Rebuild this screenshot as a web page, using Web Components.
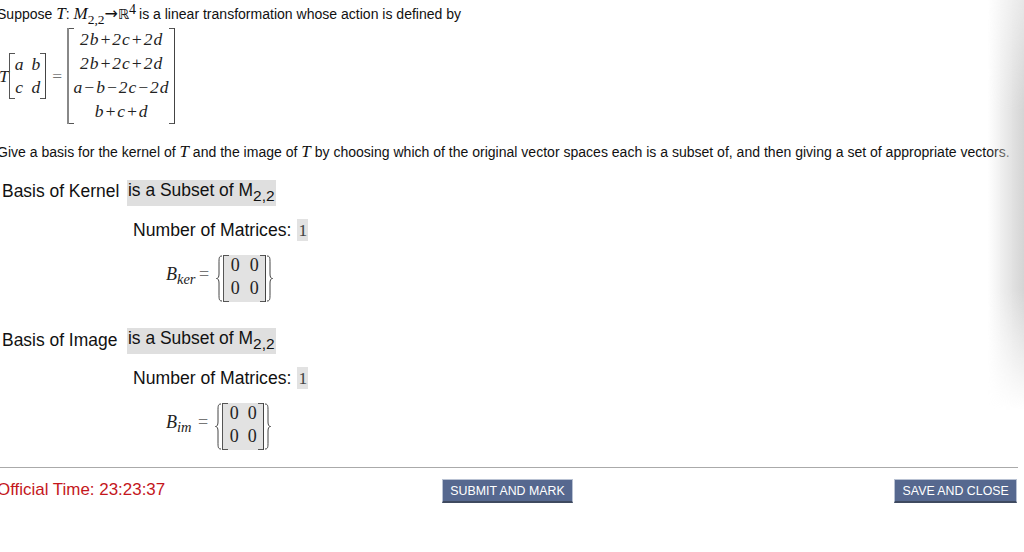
<!DOCTYPE html>
<html>
<head>
<meta charset="utf-8">
<style>
  html, body { margin: 0; padding: 0; background: #fff; overflow: hidden; }
  body { font-family: "Liberation Sans", Arial, sans-serif; color: #111; height: 552px; }
</style>
</head>
<body>
<question-page></question-page>

<script>
  const MATH = '"Liberation Serif", "Times New Roman", serif'

  // Matriz con corchetes dibujados con bordes
  class MathMatrix extends HTMLElement {
    connectedCallback() {
      const rows = JSON.parse(this.getAttribute("rows"))
      const cols = rows[0].length
      const cells = rows.flat().map(c => `<span class="cell">${c}</span>`).join("")
      this.attachShadow({ mode: "open" }).innerHTML = `
        <style>
          :host { display: inline-flex; position: relative; font: var(--math-size, 17.5px) ${MATH}; color: #222; }
          .grid {
            display: grid;
            grid-template-columns: repeat(${cols}, auto);
            grid-auto-rows: var(--row-h, 24px);
            column-gap: var(--col-gap, 8px);
            padding: var(--pad-y, 0) var(--pad-x, 6px);
            align-items: center;
            justify-items: center;
            border-left: var(--left-w, 1px) solid var(--left-c, #555);
            border-right: 1px solid #444;
            position: relative;
            background: var(--cell-bg, transparent);
            letter-spacing: var(--spacing, 0);
          }
          .grid::before, .grid::after {
            content: "";
            position: absolute;
            top: 0;
            bottom: 0;
            width: 5px;
            border-top: 1px solid #555;
            border-bottom: 1px solid #555;
          }
          .grid::before { left: 0; }
          .grid::after { right: 0; }
          .cell { font-style: var(--cell-style, italic); white-space: nowrap; padding-bottom: var(--lift, 2px); }
        </style>
        <div class="grid">${cells}</div>
      `
    }
  }

  class BasisBlock extends HTMLElement {
    connectedCallback() {
      const label = this.getAttribute("label")
      const sub = this.getAttribute("sub")
      const top = this.getAttribute("top")
      const gap = this.getAttribute("gap")
      const lead = this.getAttribute("lead")
      this.attachShadow({ mode: "open" }).innerHTML = `
        <style>
          :host { display: block; font-size: 17.45px; color: #111; }
          .head { display: flex; align-items: flex-start; padding-left: 5px; }
          .label { width: 125px; padding-top: ${top}px; line-height: 22px; white-space: nowrap; }
          .subset { background: #dfdfdf; height: 26px; padding: 0 1px; line-height: 21px; white-space: nowrap; }
          .subset sub { font-size: 15.5px; line-height: 0; vertical-align: -5px; }
          .count { display: flex; align-items: flex-start; margin: 13px 0 0 136px; height: 22px; line-height: 22px; font-size: 17.6px; white-space: nowrap; }
          .count span {
            margin-left: 6px; background: #e2e2e2; padding: 0 1px;
            font-family: ${MATH}; color: #444; line-height: 22px;
          }
          .eq { display: flex; align-items: center; height: 47px; margin: 14px 0 0 169px; font-family: ${MATH}; color: #222; }
          .eq i { font-size: 18px; width: ${lead}px; white-space: nowrap; padding-bottom: 8px; }
          .eq i sub { font-size: 14.5px; line-height: 0; vertical-align: -4px; }
          .eq b { font-weight: normal; font-size: 18px; margin: 0 7px 0 4px; color: #777; padding-bottom: 8px; }
          .brace { width: 7px; height: 47px; flex: none; }
          math-matrix {
            --row-h: 23.5px; --col-gap: ${gap}px; --pad-x: 6.5px; --lift: 3px;
            --cell-bg: #e2e2e2; --cell-style: normal; --math-size: 18px;
          }
        </style>
        <div class="head">
          <div class="label">${label}</div>
          <div class="subset">is a Subset of M<sub>2,2</sub></div>
        </div>
        <div class="count">Number of Matrices:<span>1</span></div>
        <div class="eq">
          <i>B<sub>${sub}</sub></i><b>=</b>
          <svg class="brace" viewBox="0 0 7 47" fill="none" stroke="#444" stroke-width="1"><path d="M6 1C3 1 3 3 3 8V19C3 22 2 23.5 0.5 23.5C2 23.5 3 25 3 28V39C3 44 3 46 6 46"/></svg>
          <math-matrix rows='[["0","0"],["0","0"]]'></math-matrix>
          <svg class="brace" viewBox="0 0 7 47" fill="none" stroke="#444" stroke-width="1"><path d="M1 1C4 1 4 3 4 8V19C4 22 5 23.5 6.5 23.5C5 23.5 4 25 4 28V39C4 44 4 46 1 46"/></svg>
        </div>
      `
    }
  }

  class ActionButton extends HTMLElement {
    constructor() {
      super()
      this.attachShadow({ mode: "open" }).innerHTML = `
        <style>
          :host { display: inline-block; }
          button {
            display: block;
            height: 24px;
            padding: 0 7.3px;
            background: #56688f;
            color: #fff;
            font: 12.35px "Liberation Sans", Arial, sans-serif;
            border: 0;
            border-top: 1px solid #b9c2d3;
            border-left: 1px solid #b9c2d3;
            border-right: 1px solid #b9c2d3;
            border-bottom: 2px solid #3f4a60;
            white-space: nowrap;
          }
        </style>
        <button><slot></slot></button>
      `
    }
  }

  class QuestionPage extends HTMLElement {
    constructor() {
      super()
      this.attachShadow({ mode: "open" }).innerHTML = `
        <style>
          :host { display: block; position: relative; height: 552px; overflow: hidden; font-size: 14.04px; }
          .content { margin-left: -3px; width: 1021px; }
          .m { font-family: ${MATH}; font-style: italic; font-size: 17px; }
          .intro { padding-top: 4px; height: 24px; line-height: 19px; white-space: nowrap; }
          .intro sub { font-size: 13.5px; line-height: 0; vertical-align: -5px; font-style: normal; }
          .intro sup { font-size: 14px; line-height: 0; vertical-align: 5px; font-family: ${MATH}; margin-right: -1px; }
          .ar { font-family: "DejaVu Sans", sans-serif; font-size: 16px; }
          .rr { font-family: "DejaVu Sans", sans-serif; font-size: 14px; }
          .def { display: flex; align-items: center; height: 96px; font-family: ${MATH}; font-size: 17.5px; color: #222; }
          .def .t { font-style: italic; margin-left: 2px; }
          .def .eq { margin: 0 5px 0 6px; color: #777; }
          .small { --row-h: 23px; --col-gap: 8px; --pad-x: 5px; --lift: 1px; }
          .big { --row-h: 24px; --pad-x: 4.5px; --spacing: 1px; --left-w: 2px; --left-c: #888; }
          .give { margin-top: 18px; height: 19px; line-height: 19px; white-space: nowrap; }
          .kernel { margin-top: 19px; }
          .image { margin-top: 26px; }
          hr { margin: 17px 0 0 0; border: 0; height: 1px; background: #aaa; }
          .foot { display: flex; align-items: flex-start; margin-top: 11px; padding-right: 1px; }
          .time { color: #c4161c; font-size: 16.95px; line-height: 22px; width: 445px; }
          .foot .spacer { flex: 1; }
          .shade {
            position: absolute; top: 0; right: 0; height: 410px; width: 36px;
            background: linear-gradient(to right, rgba(212,212,212,0), rgba(212,212,212,1));
            -webkit-mask-image: linear-gradient(to bottom, rgba(0,0,0,.55), #000 110px, #000 290px, transparent);
            mask-image: linear-gradient(to bottom, rgba(0,0,0,.55), #000 110px, #000 290px, transparent);
            pointer-events: none;
          }
        </style>
        <div class="content">
          <div class="intro">Suppose <span class="m">T</span>: <span class="m">M<sub>2,2</sub></span><span class="ar">→</span><span class="rr">ℝ</span><sup>4</sup> is a linear transformation whose action is defined by</div>
          <div class="def">
            <span class="t">T</span>
            <math-matrix class="small" rows='[["a","b"],["c","d"]]'></math-matrix>
            <span class="eq">=</span>
            <math-matrix class="big" rows='[["2b+2c+2d"],["2b+2c+2d"],["a−b−2c−2d"],["b+c+d"]]'></math-matrix>
          </div>
          <div class="give">Give a basis for the kernel of <span class="m">T</span> and the image of <span class="m">T</span> by choosing which of the original vector spaces each is a subset of, and then giving a set of appropriate vectors.</div>
          <basis-block class="kernel" label="Basis of Kernel" sub="ker" top="0" gap="10" lead="29"></basis-block>
          <basis-block class="image" label="Basis of Image" sub="im" top="1" gap="9" lead="28"></basis-block>
          <hr>
          <div class="foot">
            <div class="time">Official Time: 23:23:37</div>
            <action-button>SUBMIT AND MARK</action-button>
            <span class="spacer"></span>
            <action-button>SAVE AND CLOSE</action-button>
          </div>
        </div>
        <div class="shade"></div>
      `
    }
  }

  customElements.define("math-matrix", MathMatrix)
  customElements.define("basis-block", BasisBlock)
  customElements.define("action-button", ActionButton)
  customElements.define("question-page", QuestionPage)
</script>
</body>
</html>
